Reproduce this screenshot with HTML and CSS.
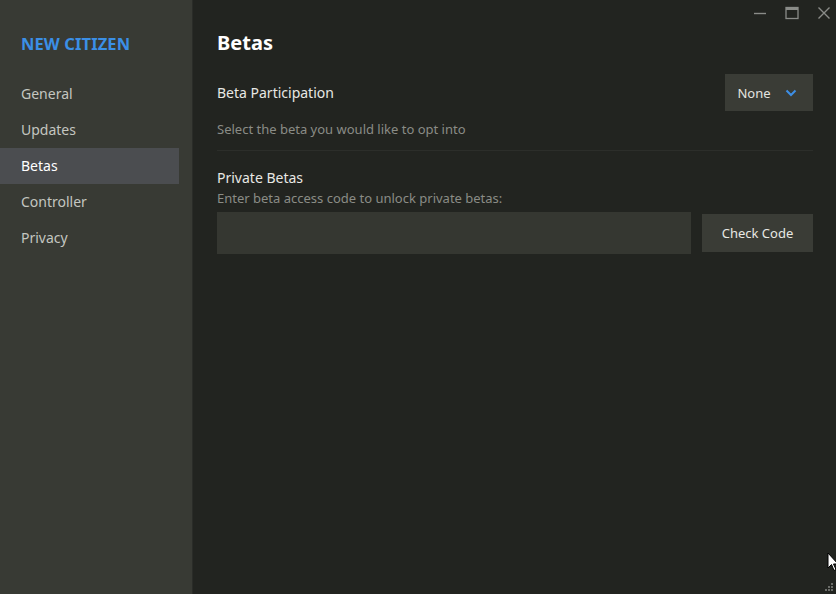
FILE: index.html
```html
<!DOCTYPE html>
<html lang="en">
<head>
  <meta charset="UTF-8">
  <title>Properties - Betas</title>
  <link rel="stylesheet" href="styles.css">
</head>
<body>
  <div class="window">
    <aside class="sidebar">
      <div class="game-title">NEW CITIZEN</div>
      <nav class="nav">
        <div class="nav-item">General</div>
        <div class="nav-item">Updates</div>
        <div class="nav-item active">Betas</div>
        <div class="nav-item">Controller</div>
        <div class="nav-item">Privacy</div>
      </nav>
    </aside>

    <main class="content">
      <div class="titlebar">
        <svg class="ctl" width="14" height="14" viewBox="0 0 14 14"><path d="M1 7.5h12" stroke="#8a8c88" stroke-width="1.4"/></svg>
        <svg class="ctl" width="14" height="14" viewBox="0 0 14 14"><rect x="1" y="1.5" width="12" height="11" fill="none" stroke="#8a8c88" stroke-width="1.3"/><path d="M1 3h12" stroke="#8a8c88" stroke-width="2"/></svg>
        <svg class="ctl" width="14" height="14" viewBox="0 0 14 14"><path d="M1.5 1.5l11 11M12.5 1.5l-11 11" stroke="#8a8c88" stroke-width="1.4"/></svg>
      </div>

      <h1>Betas</h1>

      <div class="row">
        <div class="label">Beta Participation</div>
        <div class="dropdown">
          <span>None</span>
          <svg width="12" height="8" viewBox="0 0 12 8"><path d="M1.5 1.5l4.5 4.5 4.5-4.5" fill="none" stroke="#3d8fe6" stroke-width="2"/></svg>
        </div>
      </div>
      <div class="desc">Select the beta you would like to opt into</div>
      <div class="sep"></div>

      <div class="label">Private Betas</div>
      <div class="desc tight">Enter beta access code to unlock private betas:</div>
      <div class="code-row">
        <div class="code-input"></div>
        <div class="btn">Check Code</div>
      </div>

      <svg class="cursor" width="12" height="20" viewBox="0 0 12 20"><path d="M1 1v15l3.5-3.5 2.5 6 2-1-2.5-5.5H11z" fill="#fff" stroke="#000" stroke-width="1"/></svg>
      <svg class="grip" width="10" height="10" viewBox="0 0 10 10" fill="#6a6c68"><rect x="7" y="1" width="2" height="2"/><rect x="4" y="4" width="2" height="2"/><rect x="7" y="4" width="2" height="2"/><rect x="1" y="7" width="2" height="2"/><rect x="4" y="7" width="2" height="2"/><rect x="7" y="7" width="2" height="2"/></svg>
    </main>
  </div>
</body>
</html>
```

FILE: styles.css
```css
html, body {
  margin: 0;
  padding: 0;
  height: 100%;
}

body {
  font-family: "Noto Sans", "Open Sans", sans-serif;
  font-size: 14px;
  color: #e4e4e0;
  background: #222420;
}

.window {
  display: flex;
  height: 594px;
  overflow: hidden;
}

.sidebar {
  width: 193px;
  flex: none;
  background: #383a34;
  border-right: 1px solid #2a2c28;
  padding-top: 30px;
  box-sizing: border-box;
}

.game-title {
  padding-left: 21px;
  font-size: 16.5px;
  font-weight: bold;
  color: #3b8fe6;
  letter-spacing: 0.1px;
  height: 28px;
  line-height: 28px;
}

.nav {
  margin-top: 18px;
  width: 179px;
}

.nav-item {
  height: 36px;
  line-height: 36px;
  padding-left: 21px;
  color: #c4c6c0;
}

.nav-item.active {
  background: #4b4d50;
  color: #fff;
}

.content {
  flex: 1;
  position: relative;
  padding: 0 23px 0 24px;
}

.titlebar {
  display: flex;
  justify-content: flex-end;
  gap: 18px;
  height: 24px;
  align-items: center;
  margin-right: -18px;
  padding-top: 1px;
}

h1 {
  margin: 3px 0 0;
  font-size: 20px;
  font-weight: bold;
  color: #fff;
  line-height: 30px;
}

.row {
  display: flex;
  justify-content: space-between;
  align-items: center;
  margin-top: 16px;
}

.label {
  color: #e8e8e4;
  line-height: 20px;
}

.dropdown {
  width: 88px;
  height: 37px;
  background: #3a3c36;
  display: flex;
  align-items: center;
  justify-content: center;
  gap: 14px;
  box-sizing: border-box;
  padding-right: 4px;
  font-size: 13px;
}

.desc {
  margin-top: 8px;
  font-size: 13px;
  color: #8a8c86;
  line-height: 20px;
}

.desc.tight {
  margin-top: 0;
}

.sep {
  height: 1px;
  background: #2c2e2a;
  margin: 11px 0 17px;
}

.code-row {
  display: flex;
  gap: 11px;
  align-items: center;
  margin-top: 4px;
}

.code-input {
  flex: 1;
  height: 42px;
  background: #353731;
}

.btn {
  width: 111px;
  height: 38px;
  background: #3a3c36;
  display: flex;
  align-items: center;
  justify-content: center;
  font-size: 13px;
  color: #e8e8e4;
}

.cursor {
  position: absolute;
  right: -3px;
  bottom: 22px;
}

.grip {
  position: absolute;
  right: 2px;
  bottom: 2px;
}
```
